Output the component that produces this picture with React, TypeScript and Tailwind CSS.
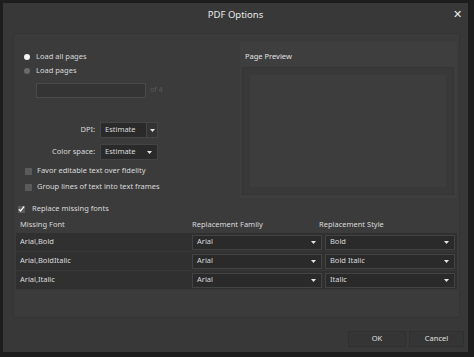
import React from "react";

function Caret() {
  return (
    <svg width="5" height="3" viewBox="0 0 5 3" className="shrink-0">
      <path d="M0 0h5L2.5 3z" fill="#e6e6e6" />
    </svg>
  );
}

function Select({ value, className }: { value: string; className: string }) {
  return (
    <div
      className={`flex items-center h-[15px] bg-[#2a2a2a] border border-[#434343] pl-[4px] pr-[5px] ${className}`}
    >
      <span className="flex-1 text-[#dcdcdc]">{value}</span>
      <Caret />
    </div>
  );
}

function SplitSelect({ value }: { value: string }) {
  return (
    <div className="flex h-[16px] w-[58px] border border-[#454545] bg-[#2a2a2a]">
      <span className="flex-1 flex items-center pl-[4px] text-[#dcdcdc]">{value}</span>
      <span className="w-[11px] flex items-center justify-center bg-[#333333] border-l border-[#454545]">
        <Caret />
      </span>
    </div>
  );
}

function Check({ checked }: { checked?: boolean }) {
  return (
    <span className="w-[7px] h-[7px] bg-[#5a5a5a] flex items-center justify-center shrink-0">
      {checked && (
        <svg width="8" height="8" viewBox="0 0 8 8">
          <path d="M1 4.2l2 2L7 1" stroke="#f2f2f2" strokeWidth="1.6" fill="none" />
        </svg>
      )}
    </span>
  );
}

export default function App() {
  const rows = [
    { font: "Arial,Bold", family: "Arial", style: "Bold" },
    { font: "Arial,BoldItalic", family: "Arial", style: "Bold Italic" },
    { font: "Arial,Italic", family: "Arial", style: "Italic" },
  ];

  return (
    <div
      className="w-[474px] h-[357px] bg-[#1d1d1d] pt-[3px] pl-[3px] pr-[6px] pb-[5px] text-[7.5px] text-[#dadada]"
      style={{ fontFamily: '"Noto Sans", sans-serif' }}
    >
      <div className="h-full flex flex-col bg-[#383838]">
        {/* title bar */}
        <div className="h-[24px] flex items-center relative shrink-0">
          <span className="flex-1 text-center text-[9.5px] text-[#e8e8e8]">PDF Options</span>
          <span className="absolute right-[6px] top-[5px] text-[11px] text-[#ececec] leading-none">✕</span>
        </div>

        {/* content panel */}
        <div className="ml-[10px] mr-[8px] mt-[6px] h-[285px] bg-[#3b3b3b] border border-[#343434] flex flex-col">
          <div className="flex">
            <div className="w-[226px] pt-[16px] pl-[10px] flex flex-col">
              <div className="h-[14px] flex items-center gap-[6px]">
                <span className="w-[6px] h-[6px] rounded-full bg-[#f4f4f4]" />
                <span>Load all pages</span>
              </div>
              <div className="h-[14px] flex items-center gap-[6px]">
                <span className="w-[6px] h-[6px] rounded-full bg-[#6b6b6b]" />
                <span>Load pages</span>
              </div>
              <div className="mt-[5px] ml-[12px] flex items-center gap-[4px]">
                <div className="w-[110px] h-[15px] bg-[#343434] border border-[#4a4a4a]" />
                <span className="text-[#5a5a5a] text-[7px]">of 4</span>
              </div>
              <div className="mt-[24px] h-[16px] flex items-center">
                <span className="w-[76px] text-right pr-[5px]">DPI:</span>
                <SplitSelect value="Estimate" />
              </div>
              <div className="mt-[6px] h-[16px] flex items-center">
                <span className="w-[76px] text-right pr-[5px]">Color space:</span>
                <Select value="Estimate" className="w-[58px] h-[16px]" />
              </div>
              <div className="mt-[4px] h-[14px] flex items-center gap-[5px] pl-[1px]">
                <Check />
                <span>Favor editable text over fidelity</span>
              </div>
              <div className="mt-[2px] h-[14px] flex items-center gap-[5px] pl-[1px]">
                <Check />
                <span>Group lines of text into text frames</span>
              </div>
            </div>

            {/* preview */}
            <div className="flex-1 mr-[2px] mt-[8px] h-[156px] bg-[#3e3e3e] px-[2px] flex flex-col">
              <div className="mt-[6px] h-[18px] flex items-center pl-[3px] text-[#e2e2e2]">Page Preview</div>
              <div className="mt-[1px] w-[212px] h-[128px] bg-[#393939] border border-[#353535] p-[7px]">
                <div className="w-full h-full bg-[#3d3d3d]" />
              </div>
            </div>
          </div>

          <div className="mt-[4px] h-[14px] flex items-center gap-[7px] pl-[4px]">
            <Check checked />
            <span>Replace missing fonts</span>
          </div>

          <div className="mx-[2px] mt-[2px] flex flex-col">
            <div className="h-[14px] flex items-center">
              <span className="w-[176px] pl-[4px]">Missing Font</span>
              <span className="w-[127px]">Replacement Family</span>
              <span>Replacement Style</span>
            </div>
            <div className="mt-[1px] flex flex-col bg-[#303030]">
              {rows.map((r) => (
                <div key={r.font} className="h-[19px] flex items-center border-b border-[#383838]">
                  <span className="w-[176px] pl-[4px] text-[#dedede]">{r.font}</span>
                  <Select value={r.family} className="w-[130px]" />
                  <Select value={r.style} className="ml-[3px] w-[130px]" />
                </div>
              ))}
            </div>
          </div>
        </div>

        {/* buttons */}
        <div className="flex-1 flex items-end justify-end gap-[3px] pr-[4px] pb-[5px]">
          <button className="w-[58px] h-[16px] bg-[#353535] border border-[#303030] text-[7.5px] text-[#e0e0e0]">
            OK
          </button>
          <button className="w-[55px] h-[16px] bg-[#353535] border border-[#303030] text-[7.5px] text-[#e0e0e0]">
            Cancel
          </button>
        </div>
      </div>
    </div>
  );
}
